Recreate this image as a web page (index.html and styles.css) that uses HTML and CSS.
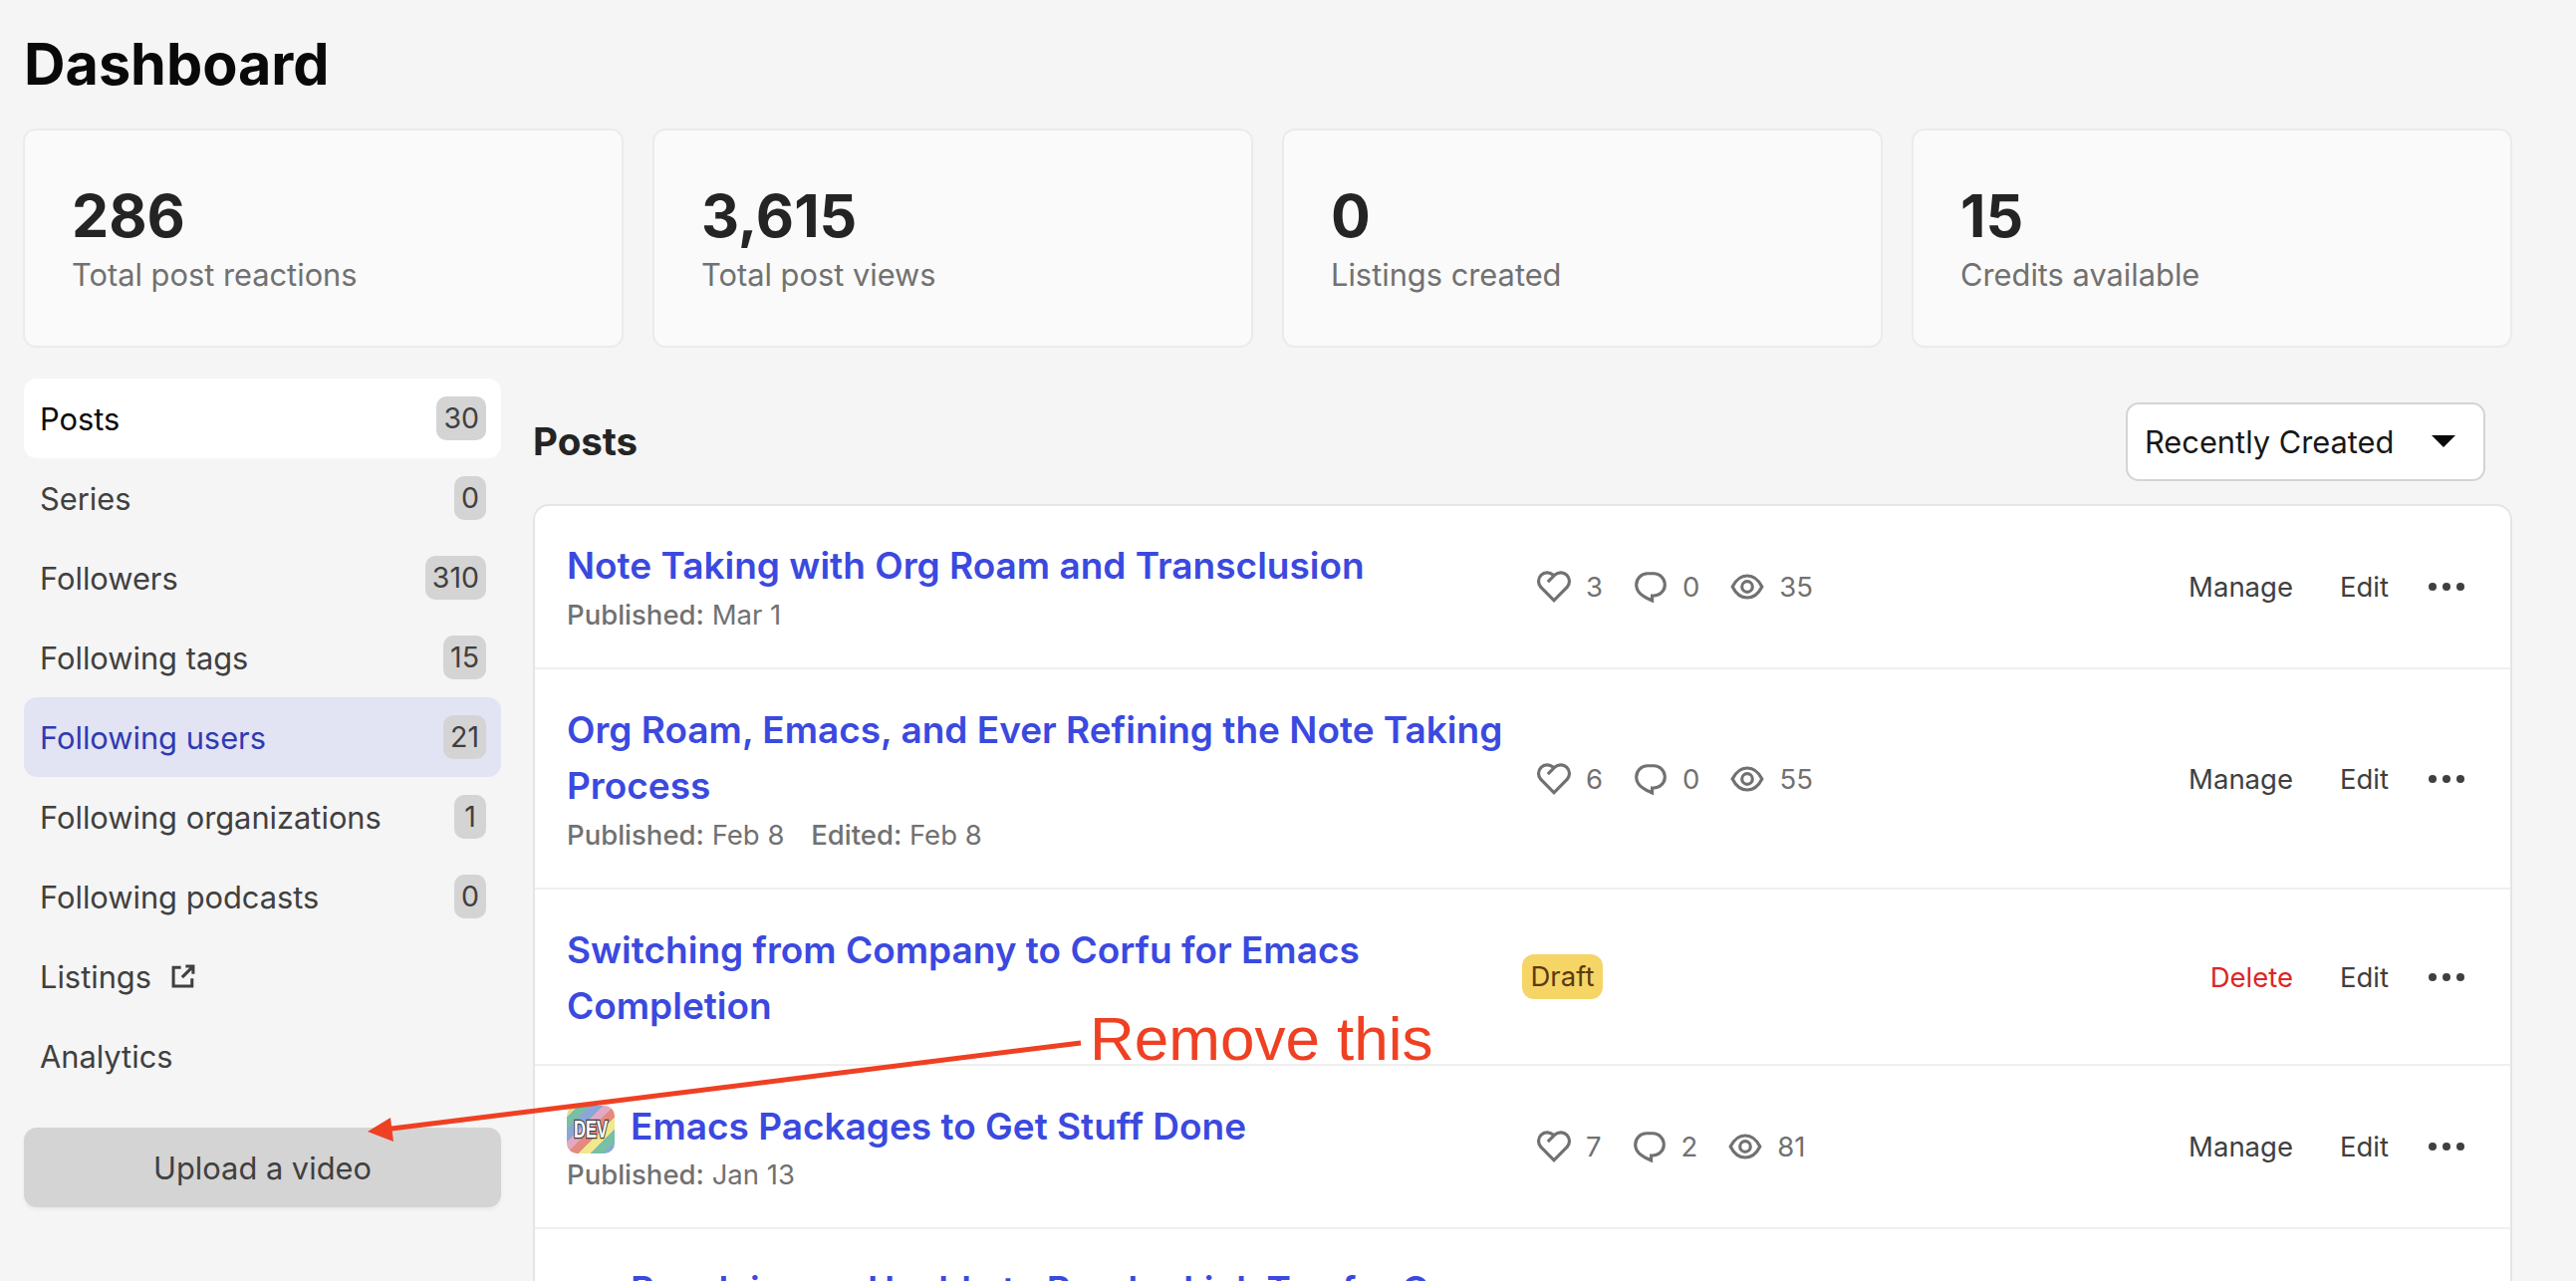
FILE: index.html
```html
<!DOCTYPE html>
<html lang="en">
<head>
    <meta charset="UTF-8">
    <meta name="viewport" content="width=device-width, initial-scale=1.0">
    <title>Dashboard</title>
    <link rel="stylesheet" href="styles.css">
</head>
<body>
    <svg class="sprite" aria-hidden="true">
        <symbol id="heart" viewBox="3.5 3.5 17 17">
            <path d="M18.884 12.595l.01.011L12 19.5l-6.894-6.894.01-.01A4.875 4.875 0 0112 5.73a4.875 4.875 0 016.884 6.865zM6.431 7.037a3.375 3.375 0 000 4.773L12 17.38l5.569-5.569a3.375 3.375 0 10-4.773-4.773L9.613 10.22l-1.06-1.062 2.371-2.372a3.375 3.375 0 00-4.492.25v.001z"/>
        </symbol>
        <symbol id="comment" viewBox="3.5 3.5 17 17">
            <path d="M10.5 5h3a6 6 0 110 12v2.625c-3.75-1.5-9-3.75-9-8.625a6 6 0 016-6zM12 15.5h1.5a4.501 4.501 0 001.722-8.657A4.5 4.5 0 0013.5 6.5h-3A4.5 4.5 0 006 11c0 2.707 1.846 4.475 6 6.36V15.5z"/>
        </symbol>
        <symbol id="eye" viewBox="3.5 3.5 17 17">
            <path class="eye-line" d="M5 12c1.8-3.6 4-5.2 7-5.2s5.200 1.600 7 5.200c-1.800 3.600-4 5.200-7 5.200s-5.200-1.600-7-5.200z"/>
            <circle class="eye-line" cx="12" cy="12" r="2.500"/>
        </symbol>
    </svg>

    <div class="page">
        <h1>Dashboard</h1>

        <div class="stats">
            <div class="stat"><strong>286</strong><span>Total post reactions</span></div>
            <div class="stat"><strong>3,615</strong><span>Total post views</span></div>
            <div class="stat"><strong>0</strong><span>Listings created</span></div>
            <div class="stat"><strong>15</strong><span>Credits available</span></div>
        </div>

        <div class="layout">
            <aside class="sidebar">
                <a class="side-link current">Posts <span class="count">30</span></a>
                <a class="side-link">Series <span class="count">0</span></a>
                <a class="side-link">Followers <span class="count">310</span></a>
                <a class="side-link">Following tags <span class="count">15</span></a>
                <a class="side-link hovered">Following users <span class="count">21</span></a>
                <a class="side-link">Following organizations <span class="count">1</span></a>
                <a class="side-link">Following podcasts <span class="count">0</span></a>
                <a class="side-link">
                    <span class="with-icon">Listings
                        <svg class="ext-icon" viewBox="0 0 24 24"><path d="M10 4.500H3.500v16h16V14M11 13L20.500 3.500M14 3.500h6.500V10"/></svg>
                    </span>
                </a>
                <a class="side-link">Analytics</a>
                <button class="upload">Upload a video</button>
            </aside>

            <main class="main">
                <div class="main-head">
                    <h2>Posts</h2>
                    <div class="sort">Recently Created <span class="caret"></span></div>
                </div>

                <div class="panel">
                    <div class="row">
                        <div class="info">
                            <a class="title">Note Taking with Org Roam and Transclusion</a>
                            <p class="meta"><b>Published:</b> Mar 1</p>
                        </div>
                        <div class="counts">
                            <svg class="icon"><use href="#heart"/></svg><span class="num">3</span>
                            <svg class="icon"><use href="#comment"/></svg><span class="num">0</span>
                            <svg class="icon"><use href="#eye"/></svg><span class="num">35</span>
                        </div>
                        <div class="actions">
                            <a>Manage</a><a>Edit</a><span class="dots"><i></i><i></i><i></i></span>
                        </div>
                    </div>

                    <div class="row">
                        <div class="info">
                            <a class="title">Org Roam, Emacs, and Ever Refining the Note Taking Process</a>
                            <p class="meta"><b>Published:</b> Feb 8 <b class="edited">Edited:</b> Feb 8</p>
                        </div>
                        <div class="counts">
                            <svg class="icon"><use href="#heart"/></svg><span class="num">6</span>
                            <svg class="icon"><use href="#comment"/></svg><span class="num">0</span>
                            <svg class="icon"><use href="#eye"/></svg><span class="num">55</span>
                        </div>
                        <div class="actions">
                            <a>Manage</a><a>Edit</a><span class="dots"><i></i><i></i><i></i></span>
                        </div>
                    </div>

                    <div class="row">
                        <div class="info">
                            <a class="title">Switching from Company to Corfu for Emacs Completion</a>
                        </div>
                        <div class="counts"><span class="draft">Draft</span></div>
                        <div class="actions">
                            <a class="danger">Delete</a><a>Edit</a><span class="dots"><i></i><i></i><i></i></span>
                        </div>
                    </div>

                    <div class="row">
                        <div class="info">
                            <a class="title"><span class="dev-logo"><span>DEV</span></span>Emacs Packages to Get Stuff Done</a>
                            <p class="meta"><b>Published:</b> Jan 13</p>
                        </div>
                        <div class="counts">
                            <svg class="icon"><use href="#heart"/></svg><span class="num">7</span>
                            <svg class="icon"><use href="#comment"/></svg><span class="num">2</span>
                            <svg class="icon"><use href="#eye"/></svg><span class="num">81</span>
                        </div>
                        <div class="actions">
                            <a>Manage</a><a>Edit</a><span class="dots"><i></i><i></i><i></i></span>
                        </div>
                    </div>

                    <div class="row">
                        <div class="info">
                            <a class="title"><span class="logo-space"></span>Resolving an Unable to Render Link Tag for Org</a>
                        </div>
                    </div>
                </div>
            </main>
        </div>
    </div>

    <!-- annotation drawn on top of the screenshot -->
    <svg class="note-arrow" viewBox="0 0 2586 1286">
        <line x1="1085" y1="1047" x2="385" y2="1134"/>
        <polygon points="369,1136 392,1122 395,1146"/>
    </svg>
    <div class="note-text">Remove this</div>
</body>
</html>
```

FILE: styles.css
```css
* {
    box-sizing: border-box;
}
html, body {
    height: 100%;
}
body {
    margin: 0;
    overflow: hidden;
    background-color: #f5f5f5;
    color: #404040;
    font-family: Inter, "Liberation Sans", sans-serif;
    font-size: 30.800px;
}
.sprite {
    position: absolute;
    width: 0;
    height: 0;
}
.page {
    padding: 29px 64px 0 24px;
}
h1 {
    margin: 0 0 29px;
    height: 71px;
    font-size: 57.500px;
    line-height: 71px;
    font-weight: 700;
    color: #090909;
}

/* stat cards */
.stats {
    display: grid;
    grid-template-columns: repeat(4, 1fr);
    gap: 29px;
    margin-left: -1px;
    margin-bottom: 31px;
}
.stat {
    display: flex;
    flex-direction: column;
    height: 220px;
    padding: 49px 47px 0;
    background-color: #fafafa;
    border: 2px solid #ebebeb;
    border-radius: 13px;
}
.stat strong {
    font-size: 59px;
    line-height: 73px;
    font-weight: 700;
    color: #242424;
}
.stat span {
    font-size: 30.800px;
    line-height: 46px;
    color: #717171;
}

.layout {
    display: flex;
    gap: 32px;
}

/* sidebar */
.sidebar {
    flex: 0 0 479px;
    display: flex;
    flex-direction: column;
}
.side-link {
    display: flex;
    align-items: center;
    justify-content: space-between;
    height: 80px;
    padding: 0 15px 0 16px;
    border-radius: 13px;
    font-size: 30.800px;
}
.side-link.current {
    background-color: #fff;
    color: #090909;
}
.side-link.hovered {
    background-color: #e2e3f3;
    color: #2f3ab2;
}
.count {
    min-width: 32px;
    height: 44px;
    padding: 0 7px;
    border-radius: 10px;
    background-color: #d4d4d4;
    color: #404040;
    font-size: 28.500px;
    line-height: 44px;
    text-align: center;
}
.with-icon {
    display: flex;
    align-items: center;
    gap: 18px;
}
.ext-icon {
    width: 28px;
    height: 28px;
    fill: none;
    stroke: #404040;
    stroke-width: 2.600;
}
.upload {
    margin-top: 32px;
    height: 80px;
    border: none;
    border-radius: 13px;
    background-color: #d4d4d4;
    box-shadow: 0 2px 4px rgba(0, 0, 0, 0.06);
    color: #404040;
    font-family: inherit;
    font-size: 30.800px;
}

/* posts list */
.main {
    flex: 1;
    min-width: 0;
}
.main-head {
    display: flex;
    align-items: center;
    justify-content: space-between;
    height: 126px;
    padding-right: 27px;
}
h2 {
    margin: 0;
    font-size: 38.500px;
    font-weight: 700;
    color: #242424;
}
.sort {
    display: flex;
    align-items: center;
    justify-content: space-between;
    width: 361px;
    height: 79px;
    padding: 0 28px 0 17px;
    background-color: #fff;
    border: 2px solid #d4d4d4;
    border-radius: 13px;
    color: #171717;
    font-size: 30.800px;
}
.caret {
    width: 0;
    height: 0;
    border-left: 12px solid transparent;
    border-right: 12px solid transparent;
    border-top: 12px solid #090909;
}
.panel {
    background-color: #fff;
    border: 2px solid #e5e5e5;
    border-radius: 16px 16px 0 0;
}
.row {
    display: flex;
    align-items: center;
    padding: 33px 46px 29px 32px;
    border-bottom: 2px solid #efefef;
}
.row:first-child {
    padding-top: 32px;
}
.info {
    flex: 0 0 973px;
    align-self: flex-start;
}
.title {
    font-size: 37px;
    line-height: 56.500px;
    font-weight: 600;
    color: #3b49df;
}
.dev-logo {
    display: inline-block;
    width: 48px;
    height: 48px;
    margin: -12px 16px -12px 0;
    border-radius: 10px;
    background: linear-gradient(135deg, #e8dc8c 0 12%, #79bfa4 12% 25%, #8aa7d8 25% 38%, #e3a9c4 38% 50%, #e68a80 50% 62%, #f2e88e 62% 75%, #79bfa4 75% 88%, #8aa7d8 88%);
    vertical-align: 2px;
}
.dev-logo span {
    display: block;
    color: #fff;
    font-family: "Liberation Sans", sans-serif;
    font-size: 23px;
    font-weight: 700;
    line-height: 48px;
    text-align: center;
    transform: scaleX(0.72);
    paint-order: stroke fill;
    -webkit-text-stroke: 2.500px #404040;
}
.logo-space {
    display: inline-block;
    width: 64px;
}
.meta {
    margin: 0;
    height: 44px;
    font-size: 27.500px;
    line-height: 41px;
    color: #717171;
}
.meta b {
    font-weight: 500;
}
.meta .edited {
    margin-left: 19px;
}
.counts {
    display: flex;
    align-items: center;
    flex: 1;
    margin-top: -3px;
    color: #717171;
    font-size: 27.500px;
}
.icon {
    width: 36px;
    height: 36px;
    fill: #717171;
}
.eye-line {
    fill: none;
    stroke: #717171;
    stroke-width: 1.500;
}
.num {
    margin: 0 30px 0 14px;
}
.draft {
    margin-left: -14px;
    padding: 0 8.500px;
    height: 45px;
    border-radius: 12px;
    background-color: #f5d565;
    color: #5c3a10;
    font-size: 27.500px;
    line-height: 45px;
}
.actions {
    display: flex;
    align-items: center;
    gap: 47px;
    margin-top: -3px;
    font-size: 27.500px;
}
.danger {
    color: #dc2626;
}
.dots {
    display: flex;
    gap: 6px;
    margin-left: -7px;
}
.dots i {
    width: 8px;
    height: 8px;
    border-radius: 50%;
    background-color: #404040;
}

/* annotation */
.note-arrow {
    position: absolute;
    left: 0;
    top: 0;
    width: 2586px;
    height: 1286px;
    pointer-events: none;
}
.note-arrow line {
    stroke: #ef4023;
    stroke-width: 5;
}
.note-arrow polygon {
    fill: #ef4023;
}
.note-text {
    position: absolute;
    left: 1094px;
    top: 1008px;
    font-family: "Liberation Sans", sans-serif;
    font-size: 62px;
    line-height: 70px;
    color: #ef4023;
}
```
